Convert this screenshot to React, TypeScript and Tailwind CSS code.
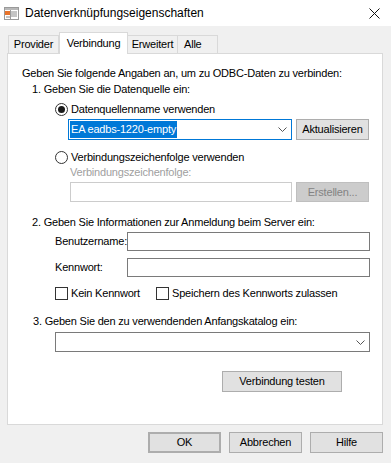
import React from "react";

function Chevron() {
  return (
    <svg width="9" height="5" viewBox="0 0 9 5" className="shrink-0">
      <path d="M0.5 0.5 L4.5 4.5 L8.5 0.5" fill="none" stroke="#555" strokeWidth="1" />
    </svg>
  );
}

function Radio({ checked }: { checked?: boolean }) {
  return (
    <span className="flex h-[13px] w-[13px] shrink-0 items-center justify-center rounded-full border border-[#333] bg-white">
      {checked && <span className="h-[7px] w-[7px] rounded-full bg-[#1a1a1a]" />}
    </span>
  );
}

function Check() {
  return <span className="h-[13px] w-[13px] shrink-0 border border-[#333] bg-white" />;
}

function Btn({ children, className = "" }: { children: React.ReactNode; className?: string }) {
  return (
    <div
      className={
        "flex h-[21px] w-[73px] shrink-0 items-center justify-center border border-[#adadad] bg-[#e1e1e1] text-[#000] " +
        className
      }
    >
      {children}
    </div>
  );
}

export default function App() {
  return (
    <div
      className="flex h-[463px] w-[391px] flex-col overflow-hidden bg-[#f0f0f0] text-[11px] leading-[15px] tracking-[-0.2px] text-black"
      style={{ fontFamily: '"Liberation Sans", Arial, sans-serif' }}
    >
      {/* title bar */}
      <div className="flex h-[26px] shrink-0 items-center bg-white pl-[4px] pr-[11px] tracking-normal">
        <svg width="15" height="13" viewBox="0 0 15 13" className="mt-[1px]">
          <rect x="0.5" y="0.5" width="14" height="12" fill="#fff" stroke="#9a9a9a" />
          <rect x="1" y="1" width="13" height="2" fill="#b8b8b8" />
          <rect x="1" y="4" width="5" height="4" fill="#e8742c" />
          <path d="M7 5h6M7 7h6M7 9h6M2 10h4" stroke="#8a8a8a" strokeWidth="1" />
          <path d="M6.5 3v9.5" stroke="#9a9a9a" />
        </svg>
        <span className="ml-[6px] text-[12px]">Datenverknüpfungseigenschaften</span>
        <div className="flex-1" />
        <svg width="11" height="11" viewBox="0 0 11 11">
          <path d="M0.5 0.5 L10.5 10.5 M10.5 0.5 L0.5 10.5" stroke="#111" strokeWidth="1" />
        </svg>
      </div>

      {/* tabs */}
      <div className="mt-[6px] flex h-[21px] items-end pl-[8px]">
        <div className="flex h-[18px] w-[51px] items-center justify-center border border-b-0 border-[#d9d9d9] bg-[#f0f0f0]">
          Provider
        </div>
        <div className="relative z-10 -mb-[1px] flex h-[22px] w-[69px] items-start justify-center border border-b-0 border-[#d9d9d9] bg-white pt-[3px]">
          Verbindung
        </div>
        <div className="flex h-[18px] w-[50px] items-center justify-center border border-l-0 border-b-0 border-[#d9d9d9] bg-[#f0f0f0]">
          Erweitert
        </div>
        <div className="flex h-[18px] w-[40px] items-center justify-start border border-l-0 border-b-0 border-[#d9d9d9] bg-[#f0f0f0] pl-[6px]">
          Alle
        </div>
      </div>

      {/* panel */}
      <div className="ml-[7px] flex h-[372px] w-[376px] flex-col border border-[#d9d9d9] bg-white">
        <div className="ml-[14px] mt-[12px] whitespace-nowrap">Geben Sie folgende Angaben an, um zu ODBC-Daten zu verbinden:</div>
        <div className="ml-[24px] mt-[1px]">1. Geben Sie die Datenquelle ein:</div>

        <div className="ml-[47px] mt-[5px] flex h-[15px] items-center gap-[3px]">
          <Radio checked />
          <span>Datenquellenname verwenden</span>
        </div>

        <div className="ml-[60px] mt-[2px] flex items-center gap-[4px]">
          <div className="flex h-[21px] w-[224px] items-center border border-[#0078d7] bg-white pl-[1px] pr-[4px]">
            <span className="bg-[#0078d7] px-[1px] leading-[17px] text-white">EA eadbs-1220-empty</span>
            <div className="flex-1" />
            <Chevron />
          </div>
          <Btn>Aktualisieren</Btn>
        </div>

        <div className="ml-[47px] mt-[10px] flex h-[15px] items-center gap-[3px]">
          <Radio />
          <span>Verbindungszeichenfolge verwenden</span>
        </div>
        <div className="ml-[62px] text-[#a0a0a0]">Verbindungszeichenfolge:</div>
        <div className="ml-[62px] mt-[2px] flex items-center gap-[4px]">
          <div className="h-[20px] w-[222px] border border-[#cccccc] bg-white" />
          <div className="flex h-[20px] w-[73px] items-center justify-center border border-[#bfbfbf] bg-[#cccccc] text-[#838383]">
            Erstellen...
          </div>
        </div>

        <div className="ml-[24px] mt-[13px]">2. Geben Sie Informationen zur Anmeldung beim Server ein:</div>
        <div className="ml-[47px] mt-[2px] flex h-[19px] items-center">
          <span className="w-[72px] whitespace-nowrap">Benutzername:</span>
          <div className="h-[19px] w-[243px] border border-[#7a7a7a] bg-white" />
        </div>
        <div className="ml-[47px] mt-[7px] flex h-[19px] items-center">
          <span className="w-[72px]">Kennwort:</span>
          <div className="h-[19px] w-[243px] border border-[#7a7a7a] bg-white" />
        </div>
        <div className="ml-[47px] mt-[9px] flex h-[15px] items-center">
          <div className="flex w-[101px] items-center gap-[3px]">
            <Check />
            <span>Kein Kennwort</span>
          </div>
          <div className="flex items-center gap-[3px]">
            <Check />
            <span>Speichern des Kennworts zulassen</span>
          </div>
        </div>

        <div className="ml-[25px] mt-[13px]">3. Geben Sie den zu verwendenden Anfangskatalog ein:</div>
        <div className="ml-[47px] mt-[3px] flex h-[20px] w-[315px] items-center justify-end border border-[#7a7a7a] bg-white pr-[4px]">
          <Chevron />
        </div>

        <div className="ml-[214px] mt-[19px] flex h-[21px] w-[120px] items-center justify-center border border-[#adadad] bg-[#e1e1e1]">
          Verbindung testen
        </div>
      </div>

      {/* bottom buttons */}
      <div className="mt-[7px] flex gap-[8px] pl-[148px]">
        <Btn className="border-2 border-[#0078d7]">OK</Btn>
        <Btn>Abbrechen</Btn>
        <Btn>Hilfe</Btn>
      </div>
    </div>
  );
}
